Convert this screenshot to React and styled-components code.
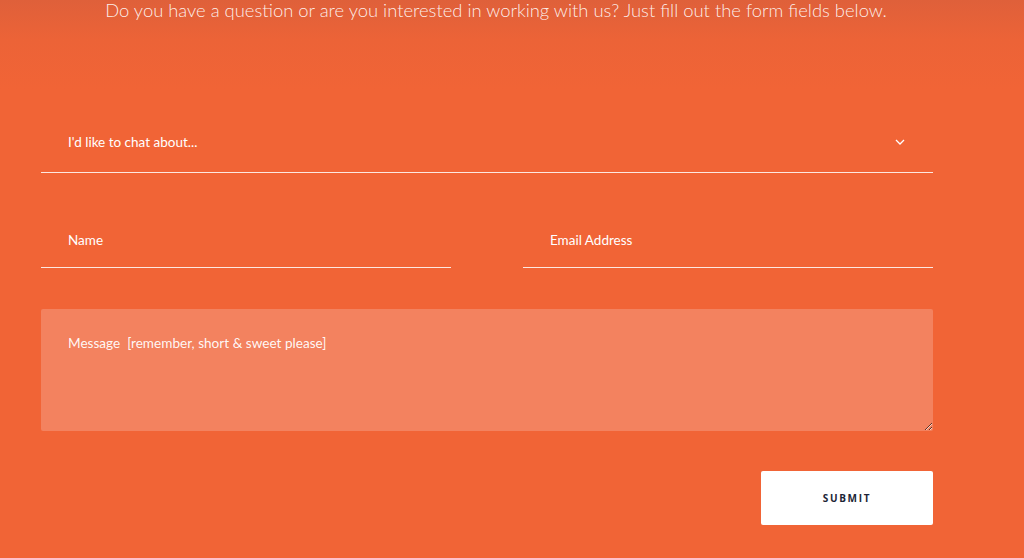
import React from 'react';
import styled, { createGlobalStyle } from 'styled-components';

const GlobalStyle = createGlobalStyle`
  html, body {
    margin: 0;
    padding: 0;
  }
  body {
    font-family: 'Lato', 'Open Sans', sans-serif;
    background: #f16436;
  }
`;

const Page = styled.div`
  height: 558px;
  overflow: hidden;
  background: linear-gradient(180deg, #df603a 0px, #ec6337 40px, #f16436 90px, #f16436 100%);
`;

const Intro = styled.p`
  margin: 0;
  padding-right: 32px;
  text-align: center;
  font-size: 18.4px;
  line-height: 20px;
  font-weight: 300;
  color: rgba(255, 255, 255, 0.9);
`;

const Form = styled.form`
  width: 892px;
  margin: 92px 0 0 41px;
  display: flex;
  flex-direction: column;
  gap: 41px;
`;

const SelectField = styled.div`
  height: 60px;
  padding: 0 27px;
  display: flex;
  align-items: center;
  justify-content: space-between;
  border-bottom: 1px solid rgba(255, 255, 255, 0.85);
  color: #fff;
  font-size: 13.5px;
  cursor: pointer;

  svg {
    margin-right: 1px;
  }
`;

const Row = styled.div`
  display: grid;
  grid-template-columns: 410px 410px;
  column-gap: 72px;
`;

const TextInput = styled.input`
  box-sizing: border-box;
  height: 54px;
  padding: 0 27px 1px;
  border: none;
  border-bottom: 1px solid rgba(255, 255, 255, 0.85);
  background: transparent;
  font-family: inherit;
  font-size: 13.5px;
  color: #fff;
  outline: none;

  &::placeholder {
    color: #fff;
    opacity: 1;
  }
`;

const MessageArea = styled.textarea`
  box-sizing: border-box;
  height: 122px;
  padding: 26px 27px;
  border: none;
  border-radius: 2px;
  background: #f3825f;
  font-family: inherit;
  font-size: 13.6px;
  color: #fff;
  outline: none;
  resize: vertical;

  &::placeholder {
    color: rgba(255, 255, 255, 0.95);
    opacity: 1;
  }
`;

const Actions = styled.div`
  display: flex;
  justify-content: flex-end;
  margin-top: -1px;
`;

const SubmitButton = styled.button`
  width: 172px;
  height: 54px;
  border: none;
  border-radius: 2px;
  background: #fff;
  color: #1c2536;
  font-family: 'Open Sans', sans-serif;
  font-size: 10px;
  font-weight: 700;
  letter-spacing: 1.7px;
  cursor: pointer;
`;

const App = () => {
  return (
    <>
      <GlobalStyle />
      <Page>
        <Intro>
          Do you have a question or are you interested in working with us? Just fill out the form fields below.
        </Intro>
        <Form onSubmit={(e) => e.preventDefault()}>
          <SelectField>
            <span>I'd like to chat about...</span>
            <svg width="10" height="6" viewBox="0 0 10 6">
              <polyline
                points="1,1 5,5 9,1"
                fill="none"
                stroke="#fff"
                strokeWidth="1.3"
              />
            </svg>
          </SelectField>
          <Row>
            <TextInput placeholder="Name" />
            <TextInput placeholder="Email Address" />
          </Row>
          <MessageArea placeholder="Message  [remember, short & sweet please]" />
          <Actions>
            <SubmitButton type="submit">SUBMIT</SubmitButton>
          </Actions>
        </Form>
      </Page>
    </>
  );
};

export default App;
